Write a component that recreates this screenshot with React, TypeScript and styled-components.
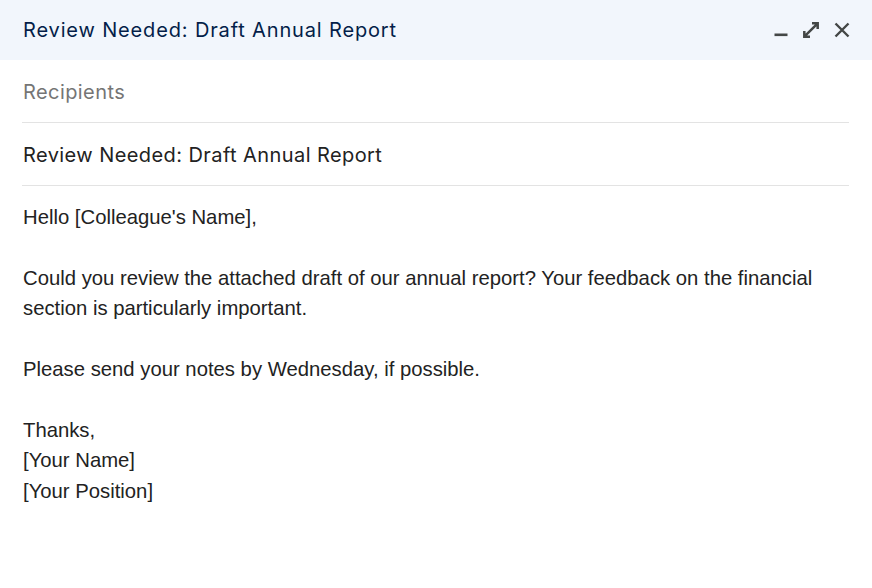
import { FC } from 'react';
import styled, { createGlobalStyle } from 'styled-components';

const GlobalStyle = createGlobalStyle`
   html, body {
      margin: 0;
      padding: 0;
      background: #ffffff;
   }
   * {
      box-sizing: border-box;
   }
`;

const MinimizeIcon: FC = () => (
   <svg width="14" height="14" viewBox="0 0 14 14" aria-hidden="true">
      <rect x="0.5" y="10.5" width="13" height="2.6" fill="currentColor" />
   </svg>
);

const ExpandIcon: FC = () => (
   <svg width="18" height="18" viewBox="0 0 18 18" aria-hidden="true">
      <path
         d="M10 2.3h5.7V8M15.7 2.3L2.3 15.7M8 15.7H2.3V10"
         fill="none"
         stroke="currentColor"
         strokeWidth="2.5"
      />
   </svg>
);

const CloseIcon: FC = () => (
   <svg width="16" height="16" viewBox="0 0 16 16" aria-hidden="true">
      <path d="M1.5 1.5l13 13M14.5 1.5l-13 13" fill="none" stroke="currentColor" strokeWidth="2.4" />
   </svg>
);

const App: FC = () => {
   const subject = 'Review Needed: Draft Annual Report';

   return (
      <>
         <GlobalStyle />
         <Compose>
            <Header>
               <Title>{subject}</Title>
               <Controls>
                  <IconButton aria-label="Minimize">
                     <MinimizeIcon />
                  </IconButton>
                  <IconButton aria-label="Full screen">
                     <ExpandIcon />
                  </IconButton>
                  <IconButton aria-label="Close">
                     <CloseIcon />
                  </IconButton>
               </Controls>
            </Header>
            <Field muted>Recipients</Field>
            <Field>{subject}</Field>
            <Body>
               <p>Hello [Colleague's Name],</p>
               <p>
                  Could you review the attached draft of our annual report? Your feedback on the
                  financial section is particularly important.
               </p>
               <p>Please send your notes by Wednesday, if possible.</p>
               <p>
                  Thanks,
                  <br />
                  [Your Name]
                  <br />
                  [Your Position]
               </p>
            </Body>
         </Compose>
      </>
   );
};

export default App;

// Styled Components
const Compose = styled.div`
   width: 872px;
   min-height: 588px;
   background: #ffffff;
   display: flex;
   flex-direction: column;
`;

const Header = styled.div`
   height: 60px;
   padding: 0 22px 0 23px;
   background: #f2f6fc;
   display: flex;
   align-items: center;
   justify-content: space-between;
`;

const Title = styled.h1`
   margin: 0;
   font-family: Inter, 'Noto Sans', sans-serif;
   font-size: 20px;
   font-weight: 400;
   letter-spacing: 0.85px;
   color: #041e49;
`;

const Controls = styled.div`
   display: flex;
   align-items: center;
   gap: 14px;
   color: #444746;
`;

const IconButton = styled.button`
   padding: 0;
   border: none;
   background: none;
   color: inherit;
   display: flex;
   align-items: center;
   justify-content: center;
   cursor: pointer;
`;

const Field = styled.div<{ muted?: boolean }>`
   margin: 0 23px 0 22px;
   height: 63px;
   padding: 1px 1px 0;
   display: flex;
   align-items: center;
   border-bottom: 1px solid #e3e3e3;
   font-family: Inter, 'Noto Sans', sans-serif;
   font-size: 20px;
   letter-spacing: 0.42px;
   color: ${({ muted }) => (muted ? '#757575' : '#222222')};
`;

const Body = styled.div`
   padding: 16px 22px 0 23px;
   font-family: 'Liberation Sans', Arial, sans-serif;
   font-size: 20.3px;
   line-height: 30.4px;
   color: #222222;

   p {
      margin: 0 0 30.4px;
   }
`;
